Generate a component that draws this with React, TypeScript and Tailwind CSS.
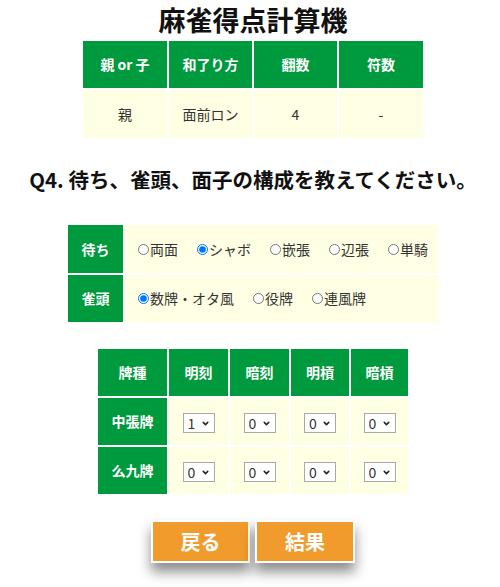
import React from "react";
import { ChevronDown } from "lucide-react";

const GREEN = "bg-[#009a3e]";

function Radio({ label, checked, name }: { label: string; checked?: boolean; name: string }) {
    return (
        <label className="flex items-center">
            <input type="radio" name={name} defaultChecked={checked} className="w-[11px] h-[11px] mr-[1px]" />
            <span>{label}</span>
        </label>
    );
}

function Count({ value }: { value: string }) {
    return (
        <div className="relative inline-block align-middle">
            <select
                defaultValue={value}
                className="appearance-none w-[32px] h-[20px] border border-[#a9a9a9] bg-white text-[14px] leading-[18px] text-[#333] pl-[4px] block"
            >
                {["0", "1", "2", "3", "4"].map(v => (
                    <option key={v} value={v}>{v}</option>
                ))}
            </select>
            <ChevronDown className="absolute right-[5px] top-[6px] w-[9px] h-[9px] text-[#222] pointer-events-none" strokeWidth={4} />
        </div>
    );
}

export default function App() {
    const font = { fontFamily: '"Noto Sans CJK JP", "Noto Sans", sans-serif' };
    return (
        <div className="w-[500px] h-[587px] bg-white pl-[6px] text-[#222]" style={font}>
            <div className="flex flex-col items-center">
                {/* title */}
                <h1 className="text-[27px] leading-[39px] font-bold text-[#111]">麻雀得点計算機</h1>

                {/* current state */}
                <table className="border-separate border-spacing-[2px] text-[14px] text-center">
                    <thead>
                        <tr className="text-white font-bold">
                            <th className={`${GREEN} w-[84px] h-[47px]`}>親 or 子</th>
                            <th className={`${GREEN} w-[83px]`}>和了り方</th>
                            <th className={`${GREEN} w-[83px]`}>翻数</th>
                            <th className={`${GREEN} w-[84px]`}>符数</th>
                        </tr>
                    </thead>
                    <tbody>
                        <tr className="text-[#333]">
                            <td className="bg-[#ffffe3] h-[48px]">親</td>
                            <td className="bg-[#ffffe3]">面前ロン</td>
                            <td className="bg-[#ffffe3]">4</td>
                            <td className="bg-[#ffffe3]">-</td>
                        </tr>
                    </tbody>
                </table>

                <h2 className="mt-[25px] text-[20.5px] leading-[28px] font-bold text-[#111]">
                    Q4. 待ち、雀頭、面子の構成を教えてください。
                </h2>

                {/* wait / pair */}
                <table className="mt-[30px] border-separate border-spacing-[2px] text-[14px]">
                    <tbody>
                        <tr>
                            <th className={`${GREEN} w-[55px] h-[48px] text-white font-bold`}>待ち</th>
                            <td className="bg-[#ffffe3] w-[313px] pl-[13px] text-[#333]">
                                <div className="flex items-center gap-[19px]">
                                    <Radio name="wait" label="両面" />
                                    <Radio name="wait" label="シャボ" checked />
                                    <Radio name="wait" label="嵌張" />
                                    <Radio name="wait" label="辺張" />
                                    <Radio name="wait" label="単騎" />
                                </div>
                            </td>
                        </tr>
                        <tr>
                            <th className={`${GREEN} h-[47px] text-white font-bold`}>雀頭</th>
                            <td className="bg-[#ffffe3] pl-[13px] text-[#333]">
                                <div className="flex items-center gap-[19px]">
                                    <Radio name="pair" label="数牌・オタ風" checked />
                                    <Radio name="pair" label="役牌" />
                                    <Radio name="pair" label="連風牌" />
                                </div>
                            </td>
                        </tr>
                    </tbody>
                </table>

                {/* melds */}
                <table className="mt-[23px] border-separate border-spacing-[2px] text-[14px] text-center">
                    <thead>
                        <tr className="text-white font-bold">
                            <th className={`${GREEN} w-[69px] h-[47px]`}>牌種</th>
                            <th className={`${GREEN} w-[59px]`}>明刻</th>
                            <th className={`${GREEN} w-[59px]`}>暗刻</th>
                            <th className={`${GREEN} w-[58px]`}>明槓</th>
                            <th className={`${GREEN} w-[57px]`}>暗槓</th>
                        </tr>
                    </thead>
                    <tbody>
                        <tr>
                            <th className={`${GREEN} h-[47px] text-white font-bold`}>中張牌</th>
                            <td className="bg-[#ffffe3]"><Count value="1" /></td>
                            <td className="bg-[#ffffe3]"><Count value="0" /></td>
                            <td className="bg-[#ffffe3]"><Count value="0" /></td>
                            <td className="bg-[#ffffe3]"><Count value="0" /></td>
                        </tr>
                        <tr>
                            <th className={`${GREEN} h-[47px] text-white font-bold`}>么九牌</th>
                            <td className="bg-[#ffffe3]"><Count value="0" /></td>
                            <td className="bg-[#ffffe3]"><Count value="0" /></td>
                            <td className="bg-[#ffffe3]"><Count value="0" /></td>
                            <td className="bg-[#ffffe3]"><Count value="0" /></td>
                        </tr>
                    </tbody>
                </table>

                {/* buttons */}
                <div className="mt-[24px] flex gap-[5px]">
                    <button className="w-[99px] h-[43px] bg-[#f19b2c] border-2 border-white text-white text-[20px] font-bold shadow-[0_9px_12px_rgba(0,0,0,0.45)]">
                        戻る
                    </button>
                    <button className="w-[100px] h-[43px] bg-[#f19b2c] border-2 border-white text-white text-[20px] font-bold shadow-[0_9px_12px_rgba(0,0,0,0.45)]">
                        結果
                    </button>
                </div>
            </div>
        </div>
    );
}
